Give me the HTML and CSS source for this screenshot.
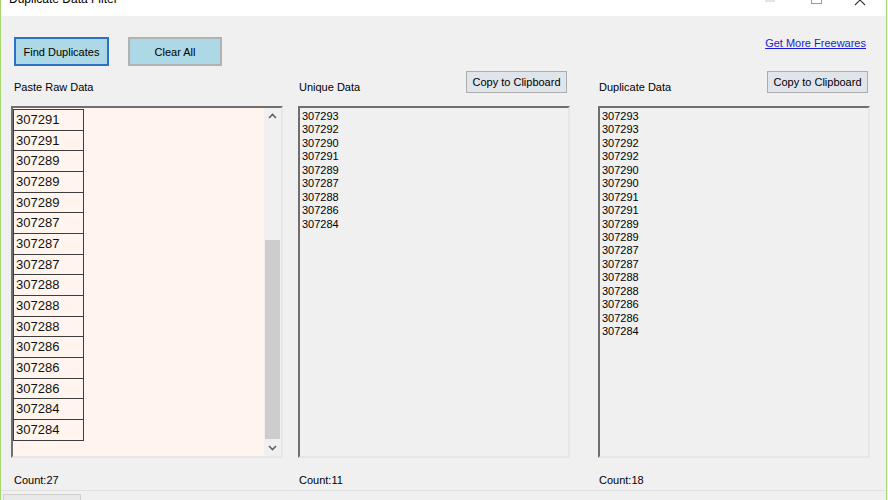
FILE: index.html
```html
<!DOCTYPE html>
<html>
<head>
<meta charset="utf-8">
<title>Duplicate Data Filter</title>
<link rel="stylesheet" href="styles.css">
</head>
<body>
<div class="window">
  <div class="titlebar">
    <div class="title">Duplicate Data Filter</div>
    <div class="caption">
      <span class="cap"><svg width="46" height="16" viewBox="0 0 46 16"><line x1="18" y1="1" x2="28" y2="1" stroke="#c8c8c8" stroke-width="1"/></svg></span>
      <span class="cap"><svg width="46" height="16" viewBox="0 0 46 16"><rect x="18.5" y="-6.5" width="10" height="10" fill="none" stroke="#9a9a9a" stroke-width="1"/></svg></span>
      <span class="cap"><svg width="46" height="16" viewBox="0 0 46 16"><path d="M11 -5 L21 5 M21 -5 L11 5" stroke="#333" stroke-width="1.1" fill="none" transform="translate(5 0)"/></svg></span>
    </div>
  </div>
  <div class="client">
    <div class="toolbar">
      <button class="btn btn-find">Find Duplicates</button>
      <button class="btn btn-clear">Clear All</button>
      <a class="link" href="#">Get More Freewares</a>
    </div>
    <div class="columns">
      <div class="col col-raw">
        <div class="col-head"><span class="label">Paste Raw Data</span></div>
        <div class="box box-raw">
          <div class="cells">
            <div class="cell">307291</div>
            <div class="cell">307291</div>
            <div class="cell">307289</div>
            <div class="cell">307289</div>
            <div class="cell">307289</div>
            <div class="cell">307287</div>
            <div class="cell">307287</div>
            <div class="cell">307287</div>
            <div class="cell">307288</div>
            <div class="cell">307288</div>
            <div class="cell">307288</div>
            <div class="cell">307286</div>
            <div class="cell">307286</div>
            <div class="cell">307286</div>
            <div class="cell">307284</div>
            <div class="cell">307284</div>
          </div>
          <div class="scrollbar">
            <div class="sb-arrow"><svg width="17" height="17" viewBox="0 0 17 17"><path d="M5 10 L8.5 6.5 L12 10" fill="none" stroke="#606060" stroke-width="1.6"/></svg></div>
            <div class="sb-track"><div class="sb-thumb"></div></div>
            <div class="sb-arrow"><svg width="17" height="17" viewBox="0 0 17 17"><path d="M5 7 L8.5 10.5 L12 7" fill="none" stroke="#606060" stroke-width="1.6"/></svg></div>
          </div>
        </div>
        <div class="count">Count:27</div>
      </div>
      <div class="col col-unique">
        <div class="col-head"><span class="label">Unique Data</span><button class="btn-copy">Copy to Clipboard</button></div>
        <div class="box box-list">
          <div class="line">307293</div>
          <div class="line">307292</div>
          <div class="line">307290</div>
          <div class="line">307291</div>
          <div class="line">307289</div>
          <div class="line">307287</div>
          <div class="line">307288</div>
          <div class="line">307286</div>
          <div class="line">307284</div>
        </div>
        <div class="count">Count:11</div>
      </div>
      <div class="col col-dup">
        <div class="col-head"><span class="label">Duplicate Data</span><button class="btn-copy">Copy to Clipboard</button></div>
        <div class="box box-list">
          <div class="line">307293</div>
          <div class="line">307293</div>
          <div class="line">307292</div>
          <div class="line">307292</div>
          <div class="line">307290</div>
          <div class="line">307290</div>
          <div class="line">307291</div>
          <div class="line">307291</div>
          <div class="line">307289</div>
          <div class="line">307289</div>
          <div class="line">307287</div>
          <div class="line">307287</div>
          <div class="line">307288</div>
          <div class="line">307288</div>
          <div class="line">307286</div>
          <div class="line">307286</div>
          <div class="line">307284</div>
        </div>
        <div class="count">Count:18</div>
      </div>
    </div>
    <div class="footer"><div class="tab"></div></div>
  </div>
</div>
</body>
</html>
```
FILE: styles.css
```css
* { box-sizing: border-box; }
html, body {
  margin: 0;
  padding: 0;
  width: 888px;
  height: 500px;
  overflow: hidden;
  background: #f0f0f0;
  font-family: "Liberation Sans", Arial, sans-serif;
  font-size: 11px;
  color: #000;
}
.window {
  width: 887px;
  height: 500px;
  border-left: 1px solid #a6d672;
  border-right: 1px solid #a6d672;
  background: #f0f0f0;
  overflow: hidden;
}
.titlebar {
  height: 16px;
  background: #fff;
  display: flex;
  align-items: flex-start;
  overflow: hidden;
}
.title {
  margin-top: -8px;
  padding-left: 8px;
  font-size: 12px;
  line-height: 15px;
  color: #000;
}
.caption {
  margin-left: auto;
  margin-right: 1px;
  display: flex;
}
.cap { display: block; width: 46px; height: 16px; }
.cap svg { display: block; }

.client {
  padding-left: 10px;
}
.toolbar {
  margin-top: 21px;
  height: 28px;
  padding-left: 3px;
  padding-right: 20px;
  display: flex;
  align-items: flex-start;
}
.btn {
  height: 29px;
  background: #add8e6;
  font-family: "Liberation Sans", Arial, sans-serif;
  font-size: 11px;
  color: #000;
  padding: 0;
  margin: 0;
}
.btn-find {
  width: 95px;
  border: 2px solid #2b72c6;
}
.btn-clear {
  width: 94px;
  margin-left: 19px;
  border: 2px solid #b2b2b2;
}
.link {
  margin-left: auto;
  color: #1a1ad6;
  text-decoration: underline;
  font-size: 11px;
  line-height: 12px;
  margin-top: 0;
}

.columns {
  margin-top: 6px;
  display: flex;
}
.col { width: 272px; }
.col-unique { margin-left: 15px; }
.col-dup { margin-left: 28px; }
.col-head {
  height: 35px;
  display: flex;
  align-items: flex-start;
}
.label {
  margin-top: 10px;
  line-height: 12px;
  padding-left: 1px;
}
.col-raw .label { padding-left: 3px; }
.btn-copy {
  margin-left: auto;
  margin-right: 3px;
  width: 101px;
  height: 22px;
  padding: 0;
  background: #e0e5eb;
  border: 1px solid #adadad;
  font-family: "Liberation Sans", Arial, sans-serif;
  font-size: 11px;
  color: #000;
}
.col-dup .btn-copy { margin-right: 2px; }

.box {
  height: 352px;
  border: 2px solid;
  border-color: #6f6f6f #e6e6e6 #e6e6e6 #6f6f6f;
}
.box-raw {
  background: #fff5ee;
  display: flex;
  justify-content: space-between;
}
.cells {
  padding-top: 1px;
  width: 71px;
}
.cell {
  height: 20.67px;
  border: 1px solid #3e3e3e;
  border-top: none;
  padding-left: 2px;
  font-size: 13px;
  line-height: 19px;
  color: #111;
}
.cell:first-child { border-top: 1px solid #3e3e3e; height: 21.67px; }
.scrollbar {
  width: 17px;
  display: flex;
  flex-direction: column;
  background: #f0f0f0;
}
.sb-arrow { height: 17px; }
.sb-arrow svg { display: block; }
.sb-track {
  flex: 1;
  display: flex;
  flex-direction: column;
  justify-content: flex-end;
}
.sb-thumb {
  height: 199px;
  margin: 0 1px;
  background: #cdcdcd;
}
.box-list {
  background: #f0f0f0;
  padding: 2px 0 0 2px;
}
.line {
  font-size: 11px;
  line-height: 13.44px;
  height: 13.44px;
  color: #000;
}
.count {
  margin-top: 16px;
  line-height: 13px;
  padding-left: 1px;
}
.col-raw .count { padding-left: 3px; }
.footer {
  margin-top: 3px;
  margin-left: -10px;
  border-top: 1px solid #e2e2e2;
}
.tab {
  margin-top: 3px;
  margin-left: 2px;
  width: 78px;
  height: 10px;
  border: 1px solid #cfcfcf;
  background: #e9e9e9;
}
```
